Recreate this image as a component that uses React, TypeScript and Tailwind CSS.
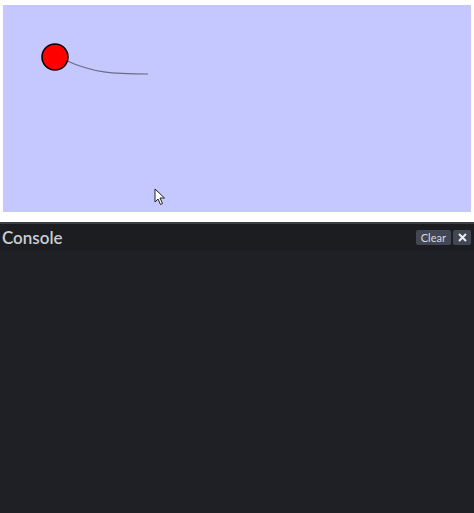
import React from 'react';

const Stage: React.FC = () => (
  <div className="relative h-[207px] w-full bg-[#c5c8ff]">
    <svg className="absolute inset-0" width="468" height="207" viewBox="0 0 468 207">
      <path d="M62 55 C 90 68, 110 69, 145 69" fill="none" stroke="#6b6d85" strokeWidth="1.2" />
      <circle cx="52" cy="52" r="13" fill="#ff0000" stroke="#000" strokeWidth="1.5" />
    </svg>
    {/* mouse pointer */}
    <svg className="absolute left-[151px] top-[183px]" width="12" height="18" viewBox="0 0 12 18">
      <path d="M1 1 L1 14 L4 11 L6.5 16.5 L8.5 15.5 L6 10 L10.5 10 Z" fill="#fff" stroke="#222" strokeWidth="1" strokeLinejoin="round" />
    </svg>
  </div>
);

const Console: React.FC = () => (
  <div className="flex flex-1 flex-col border-t-2 border-[#3b3e45] font-['Lato',sans-serif]">
    <div className="flex h-[27px] items-center justify-between bg-[#1c1d21] pl-[2px] pr-[3px]">
      <span className="text-[17px] font-semibold text-[#c9ccd3]">Console</span>
      <div className="flex items-center gap-[2px]">
        <button className="h-[15px] rounded-[2px] bg-[#434754] px-[5px] text-[11px] leading-[15px] text-[#d6d8de]">
          Clear
        </button>
        <button className="flex h-[15px] w-[18px] items-center justify-center rounded-[2px] bg-[#434754]">
          <svg width="9" height="9" viewBox="0 0 9 9">
            <path d="M1 1 L8 8 M8 1 L1 8" stroke="#eceef2" strokeWidth="2" />
          </svg>
        </button>
      </div>
    </div>
    <div className="flex-1 bg-[#1f2025]" />
  </div>
);

export default function App() {
  return (
    <div className="flex h-[513px] w-[474px] flex-col bg-white">
      <div className="px-[3px] pt-[5px] pb-[10px]">
        <Stage />
      </div>
      <Console />
    </div>
  );
}
